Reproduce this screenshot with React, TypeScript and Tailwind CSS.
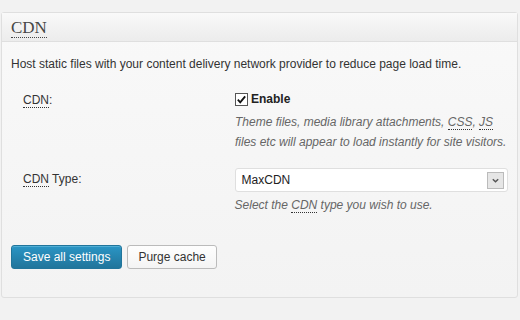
import type { ReactNode } from 'react'

function Abbr({ children }: { children: ReactNode }) {
  return <span className="border-b border-dotted border-[#333]">{children}</span>
}

export default function App() {
  return (
    <div className="h-[320px] w-[520px] bg-[#f2f2f2] pt-3 pl-px pr-[2px] font-['Liberation_Sans',Arial,sans-serif] text-[12px] text-[#333]">
      <div className="h-[286px] rounded-[3px] border border-[#dfdfdf] bg-gradient-to-b from-[#f9f9f9] to-[#f3f3f3] shadow-[0_1px_0_#fff_inset]">
        <div className="flex h-[29px] items-center border-b border-[#dfdfdf] bg-gradient-to-b from-[#f9f9f9] to-[#ececec] px-[9px]">
          <h3 className="font-['Liberation_Serif',Georgia,serif] text-[17px] leading-none text-[#464646]">
            <span className="border-b border-dotted border-[#464646]">CDN</span>
          </h3>
        </div>
        <div className="px-[9px]">
          <p className="mt-[13px]">Host static files with your content delivery network provider to reduce page load time.</p>
          <div className="mt-[17px] flex">
            <div className="w-[224px] pl-[12px] pt-[1px]">
              <Abbr>CDN</Abbr>:
            </div>
            <div>
              <label className="flex items-center gap-[3px] font-bold text-[#222]">
                <span className="flex h-[13px] w-[13px] items-center justify-center border border-[#555] bg-white">
                  <svg viewBox="0 0 12 12" className="h-[11px] w-[11px]">
                    <path d="M2 6.2 L4.6 9 L10 2.5" fill="none" stroke="#111" strokeWidth="2" />
                  </svg>
                </span>
                Enable
              </label>
              <p className="mt-[4px] leading-[20px] italic text-[#666]">
                Theme files, media library attachments, <Abbr>CSS</Abbr>, <Abbr>JS</Abbr>
                <br />
                files etc will appear to load instantly for site visitors.
              </p>
            </div>
          </div>
          <div className="mt-[16px] flex">
            <div className="w-[224px] pl-[12px] pt-[2px]">
              <Abbr>CDN</Abbr> Type:
            </div>
            <div className="w-[274px]">
              <div className="flex h-[24px] items-center justify-between rounded-[3px] border border-[#dfdfdf] bg-white pl-[6px] pr-[3px] text-[#222]">
                <span>MaxCDN</span>
                <span className="flex h-[17px] w-[17px] items-center justify-center border border-[#bbb] bg-[#e6e6e6]">
                  <svg viewBox="0 0 10 10" className="h-[9px] w-[9px]">
                    <path d="M2 3.5 L5 6.5 L8 3.5" fill="none" stroke="#555" strokeWidth="1.6" />
                  </svg>
                </span>
              </div>
              <p className="mt-[4px] italic text-[#666]">
                Select the <Abbr>CDN</Abbr> type you wish to use.
              </p>
            </div>
          </div>
          <div className="mt-[31px] flex gap-[5px]">
            <button
              type="button"
              className="h-[24px] rounded-[3px] border border-[#21759b] bg-gradient-to-b from-[#2a95c5] to-[#21759b] px-[11px] text-[12px] text-white shadow-[inset_0_1px_0_rgba(120,200,230,0.5)]"
            >
              Save all settings
            </button>
            <button
              type="button"
              className="h-[24px] rounded-[3px] border border-[#bbb] bg-gradient-to-b from-[#fefefe] to-[#f4f4f4] px-[10px] text-[12px] text-[#333]"
            >
              Purge cache
            </button>
          </div>
        </div>
      </div>
    </div>
  )
}
